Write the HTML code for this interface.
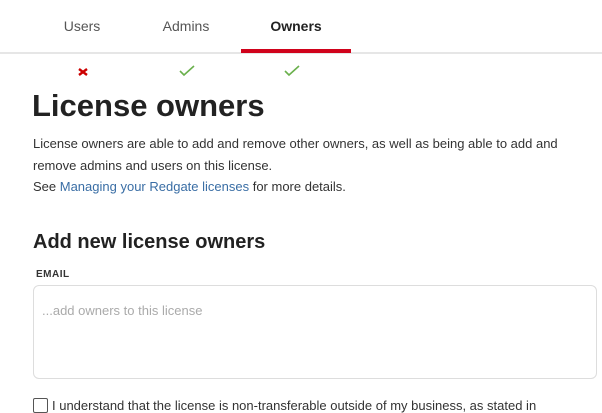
<!DOCTYPE html><html><head><style>
body{margin:0;width:602px;height:410px;overflow:hidden;background:#fff;font-family:"Liberation Sans",sans-serif;color:#333;position:relative}
.a{position:absolute;white-space:nowrap}
</style></head><body>
<div class="a" style="left:0;top:52px;width:602px;height:2px;background:#e6e6e6"></div>
<div class="a" style="left:241px;top:49px;width:110px;height:4px;background:#d0021b"></div>
<div class="a" style="left:82px;top:18px;font-size:14px;color:#555;transform:translateX(-50%)">Users</div>
<div class="a" style="left:186px;top:18px;font-size:14px;color:#555;transform:translateX(-50%)">Admins</div>
<div class="a" style="left:296px;top:18px;font-size:14px;color:#222;font-weight:bold;transform:translateX(-50%)">Owners</div>
<svg class="a" style="left:77px;top:67px" width="12" height="10"><path d="M2 2L10 8M10 2L2 8" stroke="#c00" stroke-width="2.4"/></svg>
<svg class="a" style="left:179px;top:65px" width="16" height="12"><path d="M1 6L5 10L15 1" stroke="#6ab04c" stroke-width="1.6" fill="none"/></svg>
<svg class="a" style="left:284px;top:65px" width="16" height="12"><path d="M1 6L5 10L15 1" stroke="#6ab04c" stroke-width="1.6" fill="none"/></svg>
<div class="a" style="left:32px;top:88px;font-size:31px;font-weight:bold;color:#222">License owners</div>
<div class="a" style="left:33px;top:133px;font-size:13px;line-height:21.5px">License owners are able to add and remove other owners, as well as being able to add and<br>remove admins and users on this license.<br>See <span style="color:#3a6ea5">Managing your Redgate licenses</span> for more details.</div>
<div class="a" style="left:33px;top:231px;font-size:20px;font-weight:bold;color:#222">Add new license owners</div>
<div class="a" style="left:36px;top:269px;font-size:10px;font-weight:bold;letter-spacing:.5px">EMAIL</div>
<div class="a" style="left:33px;top:285px;width:562px;height:92px;border:1px solid #ddd;border-radius:6px"></div>
<div class="a" style="left:42px;top:303px;font-size:13px;color:#aaa">...add owners to this license</div>
<div class="a" style="left:33px;top:398px;width:13px;height:13px;border:1px solid #555;border-radius:2px"></div>
<div class="a" style="left:52px;top:398px;font-size:13px">I understand that the license is non-transferable outside of my business, as stated in</div>
</body></html>
